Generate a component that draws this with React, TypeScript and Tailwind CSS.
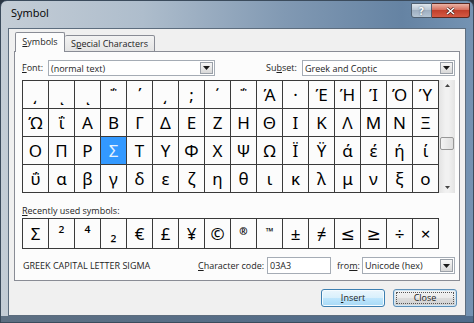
import React from "react";

const row1 = ["\u0375", "\u037A", "\u037A", "\u0385", "\u0374", "\u0375", "\u037E", "\u0384", "\u0385", "Ά", "·", "Έ", "Ή", "Ί", "Ό", "Ύ"];
const rows = [
  row1,
  Array.from("ΏΐΑΒΓΔΕΖΗΘΙΚΛΜΝΞ"),
  Array.from("ΟΠΡΣΤΥΦΧΨΩΪΫάέήί"),
  Array.from("ΰαβγδεζηθικλμνξο"),
];
const recent = ["Σ", "²", "⁴", "₂", "€", "£", "¥", "©", "®", "™", "±", "≠", "≤", "≥", "÷", "×"];

// little helper so the access keys get their underline
const Key = ({ children }: { children: React.ReactNode }) => (
  <span className="underline underline-offset-[1px]">{children}</span>
);

const Arrow = () => (
  <svg width="7" height="4" viewBox="0 0 7 4">
    <path d="M0 0h7L3.5 4z" fill="#1a1a1a" />
  </svg>
);

function Combo({ text, className }: { text: string; className: string }) {
  return (
    <div className={`flex h-[16px] items-stretch border border-[#a5acb5] bg-white ${className}`}>
      <span className="flex flex-1 items-center truncate pl-[2px] leading-none">{text}</span>
      <span className="m-px flex w-[13px] items-center justify-center border border-[#9aa0a8] bg-[linear-gradient(#f7f7f7,#d8d8d8)]">
        <Arrow />
      </span>
    </div>
  );
}

export default function App() {
  return (
    <div className="h-[323px] w-[474px] overflow-hidden bg-[#2a3542] font-['Open_Sans','Noto_Sans',sans-serif] text-[9px] text-[#1e1e1e]">
      <div className="flex h-full flex-col rounded-t-[7px] border border-[#3b4b5c] bg-[linear-gradient(to_right,#c4cdd6_0%,#aebdcc_30%,#8199b3_60%,#6583a3_85%,#7493b3_100%)]">
        {/* title bar */}
        <div className="flex h-[27px] shrink-0 items-start justify-between">
          <span className="pl-[10px] pt-[6px] text-[11px] leading-none text-black">Symbol</span>
          <div className="mr-[3px] mt-[2px] flex">
            <div className="flex h-[15px] w-[21px] items-center justify-center rounded-bl-[3px] border border-[#4f5f70] bg-[linear-gradient(#dfe6ed,#b4c2d0_50%,#9eafc1_50%,#b6c5d4)] text-[10px] font-bold leading-none text-white [text-shadow:0_0_2px_#34475a]">
              ?
            </div>
            <div className="flex h-[15px] w-[38px] items-center justify-center rounded-br-[3px] border border-l-0 border-[#5a2820] bg-[linear-gradient(#eab3a6,#d66f5d_45%,#c1402c_50%,#d55a43)]">
              <svg width="9" height="8" viewBox="0 0 9 8">
                <path d="M1 1l7 6M8 1L1 7" stroke="#3c1510" strokeWidth="2.6" />
                <path d="M1 1l7 6M8 1L1 7" stroke="#fff" strokeWidth="1.6" />
              </svg>
            </div>
          </div>
        </div>

        {/* client area */}
        <div className="ml-[7px] flex h-[288px] w-[458px] flex-col border border-[#5d6d7e] bg-[#f0f0f0] px-[5px] pt-[3px]">
          {/* tabs */}
          <div className="relative z-10 -mb-px flex items-end pl-[1px]">
            <div className="flex h-[20px] w-[50px] items-center justify-center rounded-t-[2px] border border-b-0 border-[#898c95] bg-[#fcfcfc] pb-[1px]">
              <span>
                <Key>S</Key>ymbols
              </span>
            </div>
            <div className="flex h-[17px] w-[90px] items-center justify-center rounded-t-[2px] border border-l-0 border-[#898c95] bg-[linear-gradient(#f3f3f3,#e4e4e4)]">
              <span>
                S<Key>p</Key>ecial Characters
              </span>
            </div>
          </div>

          {/* tab panel */}
          <div className="flex h-[230px] flex-col border border-[#898c95] bg-[#fcfcfc] pl-[7px] pr-[4px] pt-[8px]">
            <div className="flex h-[16px] items-center">
              <span className="w-[26px]">
                <Key>F</Key>ont:
              </span>
              <Combo text="(normal text)" className="w-[167px]" />
              <span className="ml-[51px] w-[36px]">
                Su<Key>b</Key>set:
              </span>
              <Combo text="Greek and Coptic" className="w-[153px]" />
            </div>

            {/* symbol grid + scrollbar */}
            <div className="mt-[4px] flex">
              <div className="grid grid-cols-[repeat(16,26px)] border-l border-t border-[#3a3a3a] font-['Noto_Sans','DejaVu_Sans',sans-serif] text-[17px] leading-none text-black">
                {rows.map((r, ri) =>
                  r.map((ch, ci) => {
                    const sel = ri === 2 && ci === 3;
                    return (
                      <div
                        key={`${ri}-${ci}`}
                        className={`flex h-[28px] items-center justify-center border-b border-r border-[#3a3a3a] ${
                          sel ? "bg-[#3399ff] text-[#e6f2ff]" : ""
                        }`}
                      >
                        {ch}
                      </div>
                    );
                  })
                )}
              </div>
              <div className="flex h-[113px] w-[16px] flex-col items-center justify-between bg-[linear-gradient(to_right,#e3e3e3,#f1f1f1_40%,#f1f1f1_60%,#e3e3e3)] py-[4px]">
                <svg width="5" height="3" viewBox="0 0 5 3">
                  <path d="M0 3L2.5 0L5 3z" fill="#444" />
                </svg>
                <div className="mb-[30px] mt-[44px] h-[13px] w-[14px] rounded-[2px] border border-[#979797] bg-[linear-gradient(to_right,#f4f4f4,#dedede)]" />
                <svg width="5" height="3" viewBox="0 0 5 3">
                  <path d="M0 0h5L2.5 3z" fill="#444" />
                </svg>
              </div>
            </div>

            {/* recently used */}
            <div className="mt-[12px] h-[12px] leading-[12px]">
              <Key>R</Key>ecently used symbols:
            </div>
            <div className="mt-[1px] grid w-max grid-cols-[repeat(16,26px)] border-l border-t border-[#3a3a3a] font-['Noto_Sans','DejaVu_Sans',sans-serif] text-[17px] leading-none text-black">
              {recent.map((ch, i) => {
                const small = ch === "®" || ch === "™";
                return (
                  <div
                    key={i}
                    className={`flex h-[30px] justify-center border-b border-r border-[#3a3a3a] ${
                      small ? "items-start pt-[7px] text-[10px] font-bold" : "items-center"
                    }`}
                  >
                    {ch}
                  </div>
                );
              })}
            </div>

            {/* description row */}
            <div className="mt-[8px] flex h-[17px] items-center">
              <span className="w-[176px] pl-[1px]">GREEK CAPITAL LETTER SIGMA</span>
              <span className="w-[69px]">
                <Key>C</Key>haracter code:
              </span>
              <div className="flex h-[17px] w-[64px] items-center border border-[#a5acb5] bg-white pl-[2px]">03A3</div>
              <span className="w-[31px] pl-[6px]">
                fro<Key>m</Key>:
              </span>
              <Combo text="Unicode (hex)" className="h-[17px] w-[93px]" />
            </div>
          </div>

          {/* buttons */}
          <div className="mt-[8px] flex justify-end gap-[8px] pr-[3px]">
            <div className="flex h-[18px] w-[64px] items-center justify-center rounded-[3px] border border-[#3c7fb1] bg-[linear-gradient(#eaf6fd,#d9f0fc_48%,#bee6fd_52%,#a7d9f5)] shadow-[inset_0_0_0_1px_#f4fbff]">
              <span>
                <Key>I</Key>nsert
              </span>
            </div>
            <div className="flex h-[18px] w-[64px] items-center justify-center rounded-[3px] border border-[#5c8fb8] bg-[linear-gradient(#f4f4f4,#ebebeb_48%,#dddddd_52%,#cfcfcf)] p-[2px] shadow-[inset_0_0_0_1px_#cfe6f5]">
              <div className="flex h-full w-full items-center justify-center border border-dotted border-[#555]">Close</div>
            </div>
          </div>
        </div>
        <div className="flex-1 bg-[linear-gradient(to_right,#5d6f82,#4f6c8c)]" />
      </div>
    </div>
  );
}
